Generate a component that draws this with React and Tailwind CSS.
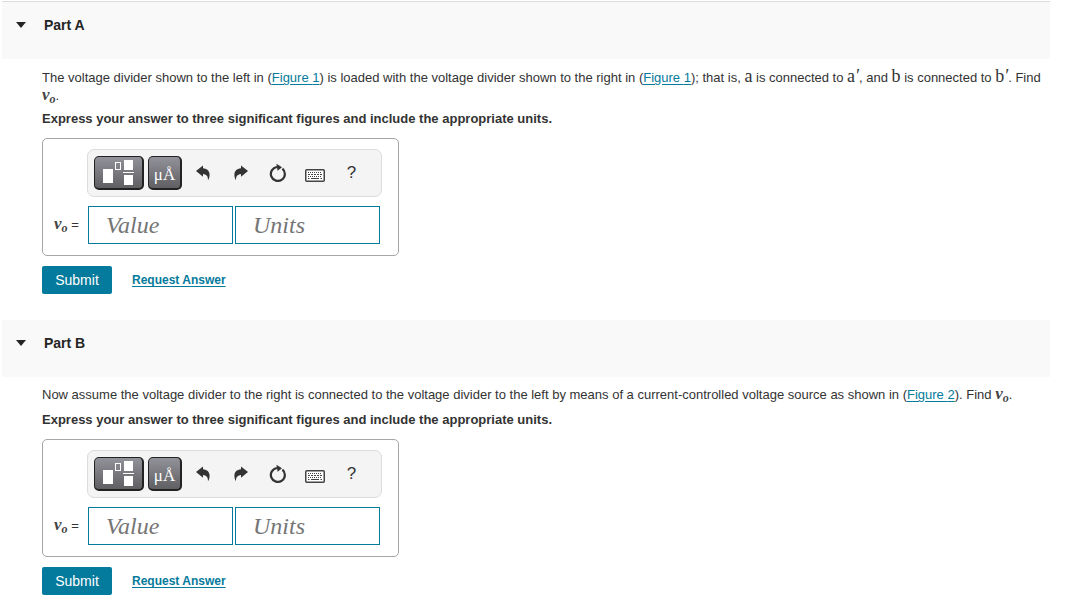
import React from "react";

function Var() {
  return (
    <span className="font-['Liberation_Serif',serif] text-[17px] leading-none italic font-bold text-[#444]">
      v<sub className="bottom-[-3px] text-[12px]">o</sub>
    </span>
  );
}

function Sym({ children, prime }) {
  return (
    <span className="font-['Liberation_Serif',serif] text-[18px] leading-none">
      {children}
      {prime && <i>′</i>}
    </span>
  );
}

function FigureLink({ n }) {
  return (
    <a href={`#figure-${n}`} className="text-[#047a9c] underline underline-offset-2">
      Figure {n}
    </a>
  );
}

function TemplatesIcon() {
  return (
    <svg width="32" height="26" viewBox="0 0 32 26" aria-hidden="true">
      <g fill="#fff">
        <rect x="0" y="9" width="10" height="14" />
        <rect x="21" y="0" width="9" height="10" />
        <rect x="20" y="12" width="11" height="1" />
        <rect x="21" y="15" width="9" height="10" />
      </g>
      <rect x="12.5" y="2.5" width="5" height="7" fill="none" stroke="#fff" />
    </svg>
  );
}

function ArrowIcon({ flip }) {
  return (
    <svg width="14" height="16" viewBox="0 0 14 16" className={flip ? "-scale-x-100" : ""} aria-hidden="true">
      <path
        d="M0 6 7 0.4V3.2C11.4 3.6 13.6 6.2 13.6 9.8 13.6 12 13.1 13.8 12 15.2 12.1 11.8 11 9.4 7 9V11.8Z"
        fill="#333"
      />
    </svg>
  );
}

function ResetIcon() {
  return (
    <svg width="18" height="20" viewBox="0 0 18 20" aria-hidden="true">
      <path d="M13.4 5.6A7 7 0 1 1 8 4" fill="none" stroke="#333" strokeWidth="2.2" />
      <path d="M7.4 0.8 13 4.2 8.6 7.8Z" fill="#333" />
    </svg>
  );
}

function KeyboardIcon() {
  return (
    <svg width="20" height="13" viewBox="0 0 20 13" aria-hidden="true">
      <rect x="0.75" y="0.75" width="18.5" height="11.5" rx="1" fill="#fff" stroke="#444" strokeWidth="1.5" />
      <g stroke="#444" fill="none">
        <path d="M3 3.5H17" strokeDasharray="1 1" />
        <path d="M3 5.5H17" strokeDasharray="2 1" />
        <path d="M3 7.5H17" strokeDasharray="1 1" />
        <path d="M3 9.5H4.5M6 9.5H14M15.5 9.5H17" />
      </g>
    </svg>
  );
}

const darkButton =
  "flex h-[34px] items-center justify-center rounded-[5px] border border-b-2 border-r-2 border-[#222] bg-linear-to-b from-[#92929a] to-[#606063]";
const iconButton = "flex h-8 w-[37px] items-center justify-center";
const field =
  "h-[38px] w-[145px] border border-[#047a9c] bg-white px-[17px] font-['Liberation_Serif',serif] text-[24px] italic text-[#333] placeholder:text-[#757575] outline-none";

function AnswerBox({ id }) {
  return (
    <div className="flex w-[357px] items-end gap-[7px] rounded-[5px] border border-[#a6a6a6] pt-[10px] pb-[11px] pl-[11px]">
      <span className="w-[27px] whitespace-nowrap pb-[10px] text-[13px] leading-[18px]">
        <Var /> =
      </span>
      <div className="-ml-px flex flex-col gap-[9px]">
        <div
          role="toolbar"
          aria-label="Answer tools"
          className="flex h-12 w-[295px] items-center rounded-[7px] border border-[#dcdcdc] bg-[#f4f4f4] pl-[6px]"
        >
          <button type="button" aria-label="Templates" className={`${darkButton} mr-1 w-[50px]`}>
            <TemplatesIcon />
          </button>
          <button
            type="button"
            aria-label="Symbols"
            className={`${darkButton} mr-[2px] w-[34px] pt-1 font-['Liberation_Serif',serif] text-[17px] text-white`}
          >
            μÅ
          </button>
          <button type="button" aria-label="Undo" className={iconButton}>
            <ArrowIcon />
          </button>
          <button type="button" aria-label="Redo" className={`${iconButton} pl-[2px]`}>
            <ArrowIcon flip />
          </button>
          <button type="button" aria-label="Reset" className={`${iconButton} pl-[2px]`}>
            <ResetIcon />
          </button>
          <button type="button" aria-label="Keyboard shortcuts" className={`${iconButton} pt-1 pl-[2px]`}>
            <KeyboardIcon />
          </button>
          <button type="button" aria-label="Help" className={`${iconButton} pl-[2px] text-[17px] text-[#333]`}>
            ?
          </button>
        </div>
        <div className="flex gap-[2px] pl-px">
          <input id={`${id}-value`} aria-label="Value" placeholder="Value" className={field} />
          <input id={`${id}-units`} aria-label="Units" placeholder="Units" className={field} />
        </div>
      </div>
    </div>
  );
}

function Part({ id, title, children }) {
  return (
    <section>
      <h2 className="bg-[#f9f9f9] px-[14px] pt-[14px] pb-[25px]">
        <button type="button" aria-expanded="true" className="flex items-center gap-[18px] text-[14px] leading-[18px] font-bold text-[#252525]">
          <svg width="10" height="6" viewBox="0 0 10 6" aria-hidden="true">
            <path d="M0 0H10L5 6Z" fill="#252525" />
          </svg>
          {title}
        </button>
      </h2>
      <div className="pt-2 pb-[26px] pl-10">
        <p className="min-h-5 text-[13px] leading-[17px]">{children}</p>
        <p className="mt-[6px] mb-[10px] text-[13px] leading-[18px] font-bold">
          Express your answer to three significant figures and include the appropriate units.
        </p>
        <AnswerBox id={id} />
        <div className="mt-[10px] flex items-center gap-5">
          <button type="button" className="h-7 w-[70px] rounded-[2px] bg-[#047a9c] text-[14px] text-white">
            Submit
          </button>
          <a href="#request" className="text-[12px] leading-[18px] font-bold text-[#047a9c] underline underline-offset-2">
            Request Answer
          </a>
        </div>
      </div>
    </section>
  );
}

export default function App() {
  return (
    <main className="mt-px mr-[18px] ml-[2px] border-t border-[#dcdcdc] bg-white font-['Liberation_Sans',Arial,sans-serif] text-[#333]">
      <Part id="a" title="Part A">
        The voltage divider shown to the left in (<FigureLink n={1} />) is loaded with the voltage divider shown to the
        right in (<FigureLink n={1} />); that is, <Sym>a</Sym> is connected to <Sym prime>a</Sym>, and <Sym>b</Sym> is
        connected to <Sym prime>b</Sym>. Find <Var />.
      </Part>
      <Part id="b" title="Part B">
        Now assume the voltage divider to the right is connected to the voltage divider to the left by means of a
        current-controlled voltage source as shown in (<FigureLink n={2} />). Find <Var />.
      </Part>
    </main>
  );
}
